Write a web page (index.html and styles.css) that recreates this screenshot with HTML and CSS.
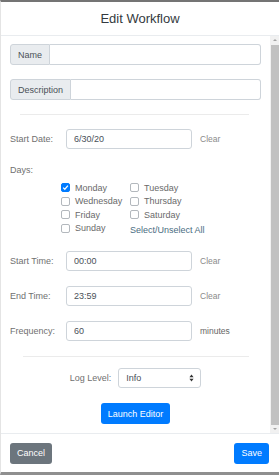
FILE: index.html
```html
<!DOCTYPE html>
<html lang="en">
<head>
    <meta charset="UTF-8">
    <meta name="viewport" content="width=device-width, initial-scale=1.0">
    <title>Edit Workflow</title>
    <link rel="stylesheet" href="styles.css">
</head>
<body>
    <div class="modal">
        <div class="modal-header">
            <h5 class="modal-title">Edit Workflow</h5>
        </div>
        <div class="modal-main">
            <div class="modal-body">
                <div class="input-group">
                    <span class="input-group-text">Name</span>
                    <input class="form-control" type="text">
                </div>
                <div class="input-group gap-top">
                    <span class="input-group-text">Description</span>
                    <input class="form-control" type="text">
                </div>

                <hr class="divider first">

                <div class="form-row">
                    <label class="row-label">Start Date:</label>
                    <input class="form-control field" type="text" value="6/30/20">
                    <span class="row-note">Clear</span>
                </div>

                <div class="days-label">Days:</div>
                <div class="days">
                    <label class="day"><span class="box checked"><svg width="7" height="7" viewBox="0 0 8 8"><path d="M1.3 4.2 L3.2 6 L6.8 1.9" fill="none" stroke="#fff" stroke-width="1.4"/></svg></span>Monday</label>
                    <label class="day"><span class="box"></span>Tuesday</label>
                    <label class="day"><span class="box"></span>Wednesday</label>
                    <label class="day"><span class="box"></span>Thursday</label>
                    <label class="day"><span class="box"></span>Friday</label>
                    <label class="day"><span class="box"></span>Saturday</label>
                    <label class="day"><span class="box"></span>Sunday</label>
                    <a class="select-all">Select/Unselect All</a>
                </div>

                <div class="form-row time-first">
                    <label class="row-label">Start Time:</label>
                    <input class="form-control field" type="text" value="00:00">
                    <span class="row-note">Clear</span>
                </div>
                <div class="form-row">
                    <label class="row-label">End Time:</label>
                    <input class="form-control field" type="text" value="23:59">
                    <span class="row-note">Clear</span>
                </div>
                <div class="form-row">
                    <label class="row-label">Frequency:</label>
                    <input class="form-control field" type="text" value="60">
                    <span class="row-note dark">minutes</span>
                </div>

                <hr class="divider second">

                <div class="log-row">
                    <label class="row-label">Log Level:</label>
                    <div class="select">
                        <span>Info</span>
                        <svg width="5" height="8" viewBox="0 0 5 8"><path d="M2.5 0.5 L4.6 3.2 H0.4 Z M2.5 7.5 L4.6 4.8 H0.4 Z" fill="#333"/></svg>
                    </div>
                </div>

                <div class="launch">
                    <button class="btn btn-primary">Launch Editor</button>
                </div>
            </div>
            <div class="scrollbar">
                <span class="arrow up"></span>
                <div class="thumb"></div>
                <span class="arrow down"></span>
            </div>
        </div>
        <div class="modal-footer">
            <button class="btn btn-secondary">Cancel</button>
            <button class="btn btn-primary">Save</button>
        </div>
    </div>
</body>
</html>
```

FILE: styles.css
```css
:root {
    --primary: #007bff;
    --secondary: #6c757d;
    --border: #ced4da;
    --text: #495057;
}

html, body {
    margin: 0;
    padding: 0;
    background: #fff;
    font-family: 'Liberation Sans', Arial, sans-serif;
    font-size: 9px;
}

.modal {
    height: 475px;
    box-sizing: border-box;
    border-top: 2px solid #747474;
    border-bottom: 3px solid #8f8f8f;
    border-left: 1px solid #e4e4e4;
    display: flex;
    flex-direction: column;
}

.modal-header {
    height: 33px;
    border-bottom: 1px solid #e9ecef;
    display: flex;
    align-items: center;
    justify-content: center;
}

.modal-title {
    margin: 0;
    font-size: 13px;
    font-weight: normal;
    color: #343a40;
}

.modal-main {
    height: 397px;
    display: flex;
}

.modal-body {
    flex: 1;
    padding: 8px 9px 0 9px;
    overflow: hidden;
}

/* fake scrollbar */
.scrollbar {
    width: 9px;
    background: #f1f1f1;
    display: flex;
    flex-direction: column;
    align-items: center;
}

.scrollbar .thumb {
    width: 8px;
    flex: 1;
    background: #c1c1c1;
}

.arrow {
    width: 0;
    height: 0;
    border-left: 2px solid transparent;
    border-right: 2px solid transparent;
}

.arrow.up {
    margin: 3px 0 4px;
    border-bottom: 2px solid #a3a3a3;
}

.arrow.down {
    margin: 3px 0 3px;
    border-top: 2px solid #a3a3a3;
}

.input-group {
    display: flex;
    height: 21px;
}

.input-group.gap-top {
    margin-top: 14px;
}

.input-group-text {
    display: flex;
    align-items: center;
    padding: 0 7px;
    background: #e9ecef;
    color: var(--text);
    border: 1px solid var(--border);
    border-radius: 3px 0 0 3px;
}

.form-control {
    box-sizing: border-box;
    border: 1px solid var(--border);
    border-radius: 3px;
    font-family: inherit;
    font-size: 9px;
    color: var(--text);
    padding: 0 7px;
    margin: 0;
    outline: none;
}

.input-group .form-control {
    flex: 1;
    border-left: none;
    border-radius: 0 3px 3px 0;
    min-width: 0;
}

.divider {
    border: 0;
    border-top: 1px solid #ebebeb;
    margin: 14px 12px 14px 10px;
}

.divider.second {
    margin: 15px 12px 11px 13px;
}

.form-row {
    display: flex;
    align-items: center;
    height: 20px;
    margin-bottom: 15px;
}

.form-row.time-first {
    margin-top: 16px;
}

.row-label {
    color: #707070;
}

.form-row .row-label {
    width: 56px;
}

.field {
    width: 126px;
    height: 20px;
}

.row-note {
    margin-left: 8px;
    color: #8a8a8a;
    font-size: 8.5px;
}

.row-note.dark {
    color: #666;
}

.days-label {
    color: #707070;
    line-height: 12px;
}

.days {
    display: grid;
    grid-template-columns: 69px 80px;
    grid-auto-rows: 13.5px;
    margin: 5px 0 0 51px;
}

.day {
    display: flex;
    align-items: center;
    gap: 5px;
    color: #6a6a6a;
}

.box {
    box-sizing: border-box;
    width: 9px;
    height: 9px;
    border: 1px solid #b3b8bd;
    border-radius: 2px;
    display: flex;
    align-items: center;
    justify-content: center;
    background: #fff;
}

.box.checked {
    background: var(--primary);
    border-color: var(--primary);
}

.select-all {
    color: #4a6d82;
    display: flex;
    align-items: center;
    padding-top: 3px;
}

.log-row {
    display: flex;
    align-items: center;
    justify-content: center;
    gap: 7px;
    height: 20px;
}

.select {
    box-sizing: border-box;
    width: 83px;
    height: 20px;
    border: 1px solid var(--border);
    border-radius: 3px;
    display: flex;
    align-items: center;
    justify-content: space-between;
    padding: 0 6px 0 7px;
    color: var(--text);
}

.launch {
    display: flex;
    justify-content: center;
    margin-top: 15px;
}

.btn {
    height: 21px;
    padding: 0 7px;
    border: none;
    border-radius: 3px;
    color: #fff;
    font-family: inherit;
    font-size: 9px;
}

.btn-primary {
    background: var(--primary);
}

.btn-secondary {
    background: var(--secondary);
}

.modal-footer {
    flex: 1;
    border-top: 1px solid #e9ecef;
    display: flex;
    align-items: center;
    justify-content: space-between;
    padding: 0 10px 0 9px;
}
```
